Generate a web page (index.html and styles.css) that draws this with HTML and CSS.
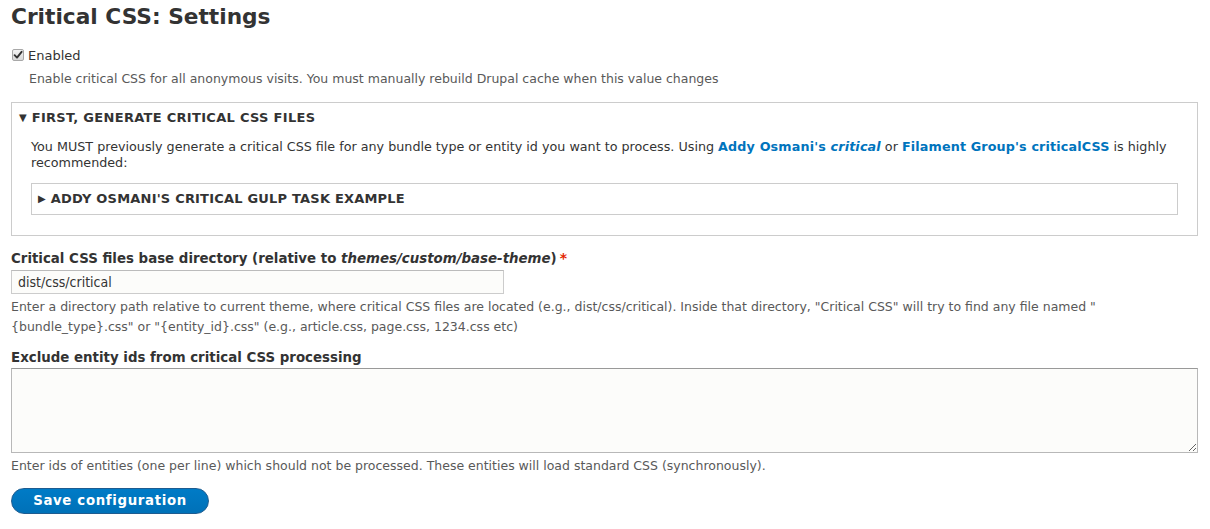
FILE: index.html
```html
<!DOCTYPE html>
<html>
<head>
<meta charset="utf-8">
<link rel="stylesheet" href="styles.css">
</head>
<body>
<div class="page">
  <h1 class="title">Critical CSS: Settings</h1>
  <form class="form">
    <div class="item item-check">
      <div class="check-row">
        <span class="check" aria-hidden="true"><svg width="10" height="10" viewBox="0 0 10 10"><path d="M1.6 5.2 L4 7.6 L8.6 1.8" fill="none" stroke="#333" stroke-width="1.9" stroke-linecap="round" stroke-linejoin="round"/></svg></span>
        <label class="check-label">Enabled</label>
      </div>
      <div class="desc desc-check">Enable critical CSS for all anonymous visits. You must manually rebuild Drupal cache when this value changes</div>
    </div>

    <details class="details" open>
      <summary class="summary"><span class="arrow">▼</span>FIRST, GENERATE CRITICAL CSS FILES</summary>
      <div class="details-body">
        <p class="para">You MUST previously generate a critical CSS file for any bundle type or entity id you want to process. Using <a class="link" href="#">Addy Osmani's <em>critical</em></a> or <a class="link" href="#">Filament Group's criticalCSS</a> is highly recommended:</p>
        <details class="details inner">
          <summary class="summary"><span class="arrow">▶</span>ADDY OSMANI'S CRITICAL GULP TASK EXAMPLE</summary>
        </details>
      </div>
    </details>

    <div class="item item-dir">
      <label class="label label-dir">Critical CSS files base directory (relative to <em>themes/custom/base-theme</em>)<span class="req">*</span></label>
      <input type="text" class="text" value="dist/css/critical">
      <div class="desc desc-wide">Enter a directory path relative to current theme, where critical CSS files are located (e.g., dist/css/critical). Inside that directory, "Critical CSS" will try to find any file named "{bundle_type}.css" or "{entity_id}.css" (e.g., article.css, page.css, 1234.css etc)</div>
    </div>

    <div class="item item-area">
      <label class="label label-area">Exclude entity ids from critical CSS processing</label>
      <textarea class="area"></textarea>
      <div class="desc desc-area">Enter ids of entities (one per line) which should not be processed. These entities will load standard CSS (synchronously).</div>
    </div>

    <div class="actions">
      <button type="button" class="button">Save configuration</button>
    </div>
  </form>
</div>
</body>
</html>
```

FILE: styles.css
```css
html, body {
  margin: 0;
  padding: 0;
  background: #fff;
}
body {
  font-family: "DejaVu Sans", Verdana, sans-serif;
  color: #333;
  font-size: 13px;
}
.page {
  padding: 4px 12px 0 11px;
}
.title {
  font-size: 21.7px;
  font-weight: bold;
  margin: 0 0 19px 0;
  line-height: 26px;
  color: #333;
}
.form {
  display: flex;
  flex-direction: column;
}
.item-check {
  margin-bottom: 14px;
}
.check-row {
  display: flex;
  align-items: center;
  gap: 4px;
  height: 14px;
}
.check {
  display: flex;
  align-items: center;
  justify-content: center;
  box-sizing: border-box;
  width: 12px;
  height: 12px;
  margin-left: 1px;
  margin-top: -2px;
  border: 1px solid #a8a8a8;
  border-radius: 2px;
  background: linear-gradient(#f4f4f4, #d8d8d8);
}
.check svg {
  display: block;
}
.check-label {
  font-size: 13px;
  line-height: 14px;
}
.desc {
  font-size: 12.5px;
  color: #595959;
  line-height: 18px;
  margin-top: 4px;
}
.desc-check {
  padding-left: 18px;
  margin-top: 7px;
}
.desc-wide {
  line-height: 20px;
  margin-top: 3px;
}
.desc-area {
  margin-top: 4px;
}
.details {
  border: 1px solid #ccc;
  margin: 0 0 13px 0;
  padding: 0;
}
.summary {
  list-style: none;
  font-weight: bold;
  text-transform: uppercase;
  font-size: 13px;
  letter-spacing: 0.3px;
  padding: 7px 7px 6px;
  line-height: 16px;
  cursor: pointer;
}
.summary::-webkit-details-marker {
  display: none;
}
.arrow {
  font-size: 10px;
  margin-right: 5px;
  letter-spacing: 0;
  display: inline-block;
  vertical-align: 1px;
}
.details-body {
  padding: 7px 19px 20px 19px;
}
.para {
  margin: 0 0 12px 0;
  line-height: 16px;
  font-size: 12.72px;
}
.link {
  color: #0074bd;
  font-weight: bold;
  letter-spacing: 0.15px;
  text-decoration: none;
}
.inner {
  margin: 0;
}
.inner .summary {
  padding: 7px 6px 7px;
  letter-spacing: 0.2px;
}
.item-dir {
  margin-bottom: 12px;
}
.item-area {
  margin-bottom: 0;
}
.label {
  display: block;
  font-weight: bold;
  font-size: 13.37px;
  line-height: 18px;
  margin-bottom: 2px;
}
.label-area {
  margin-bottom: 1px;
}
.req {
  color: #e32700;
  margin-left: 3px;
  font-size: 14px;
}
.text {
  display: block;
  box-sizing: border-box;
  width: 493px;
  height: 24px;
  border: 1px solid #ccc;
  border-top-color: #bbb;
  background: #fcfcfa;
  font-family: "DejaVu Sans Condensed", "DejaVu Sans", sans-serif;
  font-size: 14px;
  color: #333;
  padding: 2px 6px;
  margin: 0;
}
.area {
  display: block;
  box-sizing: border-box;
  width: 100%;
  height: 85px;
  border: 1px solid #b8b8b8;
  border-top-color: #999;
  background: #fcfcfa;
  font-family: "DejaVu Sans Condensed", "DejaVu Sans", sans-serif;
  margin: 0;
  resize: vertical;
}
.actions {
  padding-top: 13px;
}
.button {
  font-family: "DejaVu Sans", sans-serif;
  font-weight: bold;
  font-size: 13.3px;
  letter-spacing: 0.05em;
  color: #fff;
  background: linear-gradient(#007bc6, #0071b8);
  border: 1px solid #1e5c90;
  border-radius: 20em;
  width: 198px;
  height: 26px;
  padding: 0;
  line-height: 24px;
}
```
